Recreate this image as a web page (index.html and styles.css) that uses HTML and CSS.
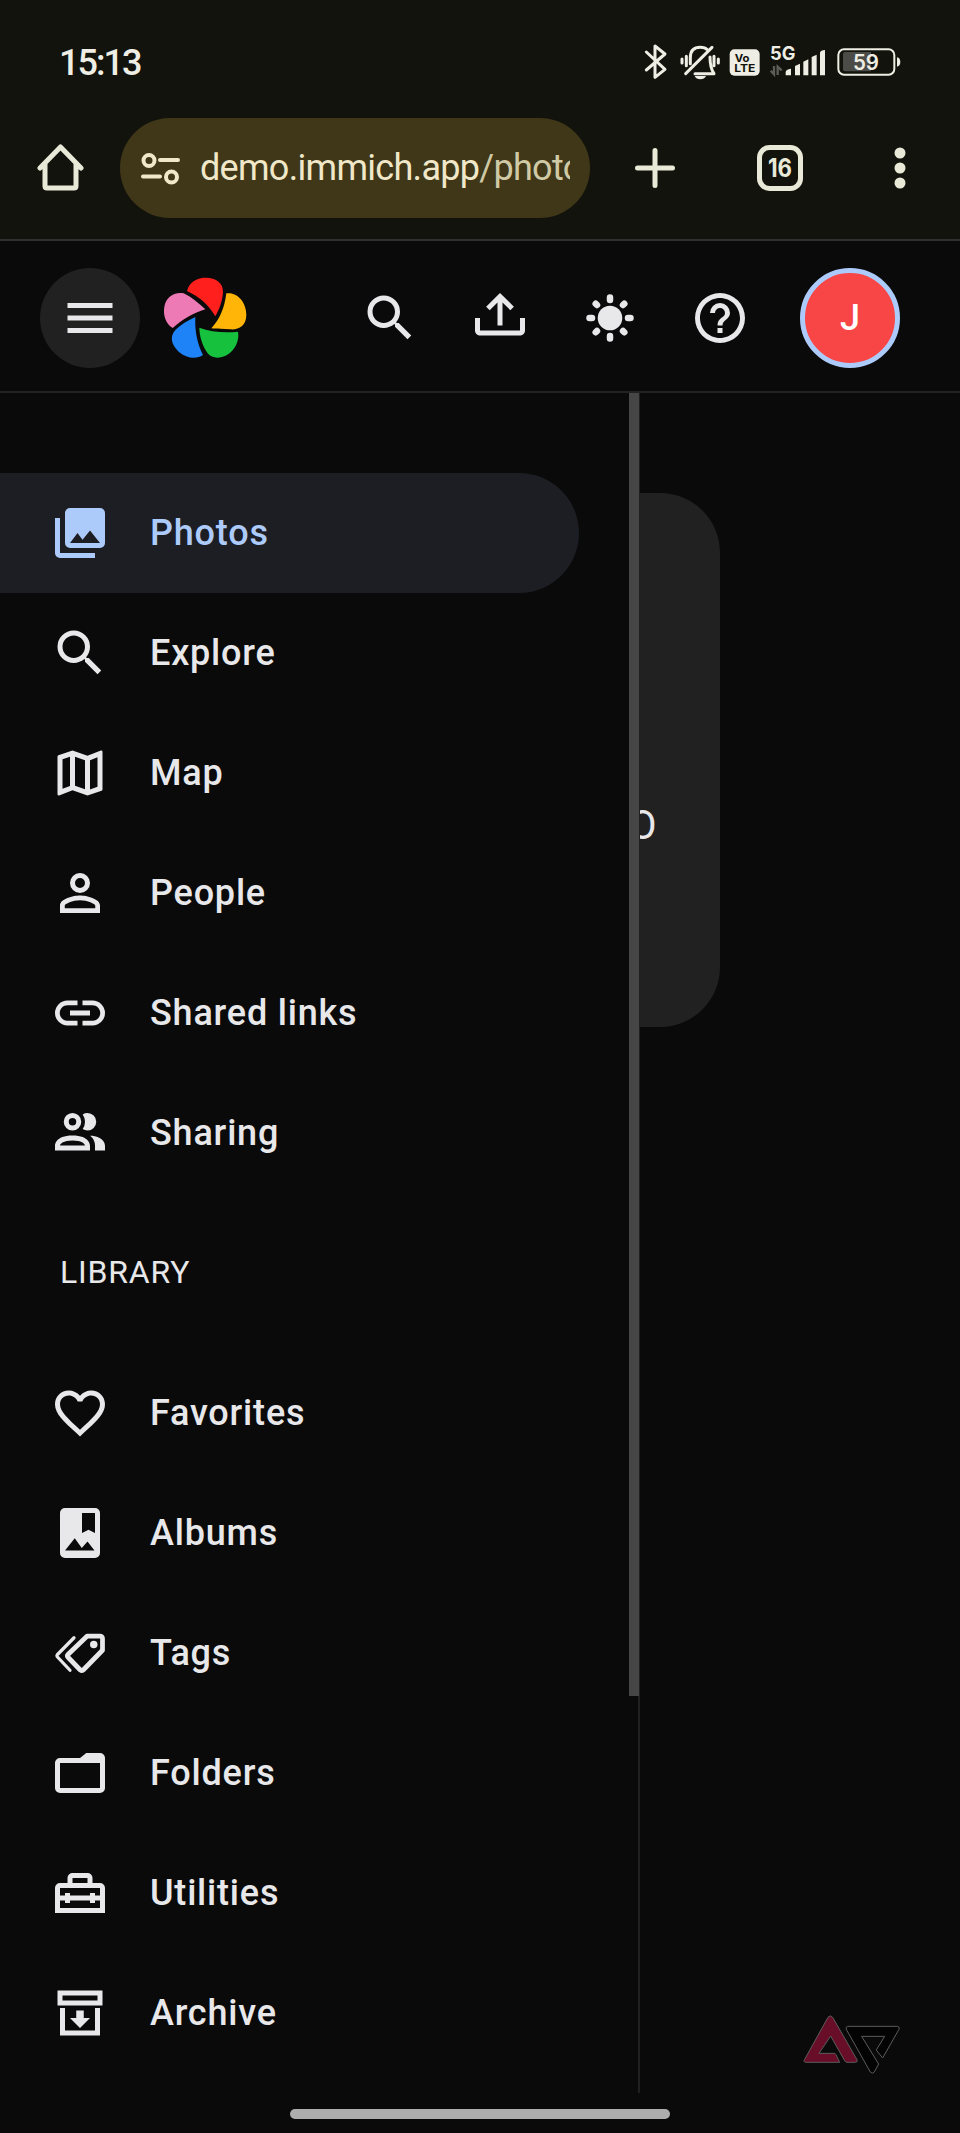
FILE: index.html
```html
<!DOCTYPE html>
<html lang="en">
<head>
  <meta charset="utf-8">
  <title>Photos - Immich</title>
  <link rel="stylesheet" href="styles.css">
</head>
<body>
  <div class="statusbar">
    <span class="time">15:13</span>
    <div class="status-icons">
      <svg width="28" height="40" viewBox="490 125 84 120"><path class="line" stroke-width="9" d="M500 155L556 207L526 231V137L556 161L500 209"/></svg>
      <svg width="42" height="40" viewBox="598 125 126 120">
        <path class="line" stroke-width="9" d="M632 190V172C632 150 645 141 662 141C672 141 679 144 684 149M691 170C691 195 694 207 703 220H646M618 220L697 141M607 176V188M620 168V196M703 168V196M716 176V188"/>
        <path class="fill" d="M645 227H679Q674 237 662 237Q650 237 645 227Z"/>
      </svg>
      <svg width="31.33" height="40" viewBox="748 125 94 120">
        <rect class="fill" x="750" y="147" width="90" height="79" rx="14"/>
        <text class="volte" x="765" y="184" textLength="44" lengthAdjust="spacingAndGlyphs">Vo</text>
        <text class="volte" x="764" y="216" textLength="63" lengthAdjust="spacingAndGlyphs">LTE</text>
      </svg>
      <svg width="60" height="40" viewBox="866 125 180 120">
        <text class="network" x="869" y="179" textLength="76" lengthAdjust="spacingAndGlyphs">5G</text>
        <path class="arrows" d="M881 197V222L871 211M892 224V199L904 210"/>
        <path class="fill" d="M916 216Q916 207 932 205V225H916ZM944 197L959 190V225H944ZM969 184L984 177V225H969ZM994 170L1009 163V225H994ZM1019 157Q1021 149 1034 149V225H1019Z"/>
      </svg>
      <svg width="64.67" height="40" viewBox="1070 125 194 120">
        <path class="charge" d="M1094 155H1172V213H1094Q1088 213 1088 207V161Q1088 155 1094 155Z"/>
        <rect class="line" x="1074" y="147" width="168" height="76" rx="17" stroke-width="6"/>
        <path class="fill" d="M1250 171Q1260 173 1260 185Q1260 197 1250 199Z"/>
        <text class="battery" x="1118" y="209" textLength="78" lengthAdjust="spacingAndGlyphs">59</text>
      </svg>
    </div>
  </div>

  <div class="toolbar">
    <svg class="home" width="48" height="48" viewBox="0 0 48 48"><path class="line" stroke-width="5" d="M3 24L23.5 3L44 24M8 20V42Q8 44 10 44H37Q39 44 39 42V20"/></svg>
    <div class="url">
      <svg width="40" height="34" viewBox="0 0 40 34"><path class="line" stroke-width="4" stroke-linecap="butt" d="M20 9H38M3 25.5H20"/><circle class="line" stroke-width="4" cx="9" cy="9.500" r="5.500"/><circle class="line" stroke-width="4" cx="31.500" cy="26" r="5.500"/></svg>
      <span class="address">demo.immich.app<span class="path">/photos</span></span>
    </div>
    <svg class="plus" width="42" height="42" viewBox="0 0 42 42"><path class="line" stroke-width="5" d="M3.500 21H38.500M21 3.500V38.500"/></svg>
    <svg class="tabs" width="46" height="46" viewBox="0 0 46 46">
      <rect class="line" x="2.500" y="2.500" width="41" height="41" rx="10" stroke-width="5"/>
      <text class="tabcount" x="11" y="32" textLength="24" lengthAdjust="spacingAndGlyphs">16</text>
    </svg>
    <svg class="more" width="12" height="42" viewBox="0 0 12 42"><g class="fill"><circle cx="6" cy="6" r="5.500"/><circle cx="6" cy="21" r="5.500"/><circle cx="6" cy="36" r="5.500"/></g></svg>
  </div>

  <header class="header">
    <button class="menu"><svg class="icon" viewBox="0 0 24 24"><path d="M3,6H21V8H3V6M3,11H21V13H3V11M3,16H21V18H3V16Z"/></svg></button>
    <svg class="logo" viewBox="485 105 260 255">
      <path fill="#ff201d" d="M560 153C568 120 600 113 615 113C650 113 668 130 668 155C667 185 655 210 645 229C625 195 600 172 560 153Z"/>
      <path fill="#ffb508" d="M678 160C710 155 738 185 738 225C738 258 715 270 690 268C670 267 650 267 633 265C660 235 672 205 678 160Z"/>
      <path fill="#16c13e" d="M597 263C630 275 670 280 713 275C718 300 705 330 680 345C655 358 635 355 622 340C605 315 598 290 597 263Z"/>
      <path fill="#1e83f7" d="M585 231C583 270 590 310 608 345C590 357 560 357 535 335C512 312 508 290 525 270C540 255 560 243 585 231Z"/>
      <path fill="#ed79b5" d="M615 208C580 218 545 240 517 264C495 250 488 225 492 200C497 172 520 155 550 160C575 172 595 190 615 208Z"/>
    </svg>
    <div class="actions">
      <svg class="icon" viewBox="0 0 24 24"><path id="magnify" d="M9.5,3A6.5,6.5 0 0,1 16,9.500C16,11.110 15.410,12.590 14.440,13.730L14.710,14H15.500L20.500,19L19,20.500L14,15.500V14.710L13.730,14.440C12.590,15.410 11.110,16 9.500,16A6.500,6.500 0 0,1 3,9.500A6.500,6.500 0 0,1 9.500,3M9.500,5C7,5 5,7 5,9.500C5,12 7,14 9.500,14C12,14 14,12 14,9.500C14,7 12,5 9.500,5Z"/></svg>
      <svg class="icon" viewBox="0 0 24 24"><path d="M2 12H4V17H20V12H22V17C22 18.110 21.110 19 20 19H4C2.900 19 2 18.110 2 17V12M12 2L6.460 7.460L7.880 8.880L11 5.750V15H13V5.750L16.130 8.880L17.550 7.450L12 2Z"/></svg>
      <svg class="icon" viewBox="0 0 60 60"><circle cx="30" cy="30" r="12.300"/><path class="line" stroke-width="6.500" d="M30 9.500V12M30 48V50.500M9.500 30H12M48 30H50.500M15.700 15.700L17 17M43 43L44.300 44.300M15.700 44.300L17 43M43 17L44.300 15.700"/></svg>
      <svg class="icon" viewBox="0 0 24 24"><path d="M11,18H13V16H11V18M12,2A10,10 0 0,0 2,12A10,10 0 0,0 12,22A10,10 0 0,0 22,12A10,10 0 0,0 12,2M12,20C7.590,20 4,16.410 4,12C4,7.590 7.590,4 12,4C16.410,4 20,7.590 20,12C20,16.410 16.410,20 12,20M12,6A4,4 0 0,0 8,10H10A2,2 0 0,1 12,8A2,2 0 0,1 14,10C14,12 11,11.750 11,15H13C13,12.750 16,12.500 16,10A4,4 0 0,0 12,6Z"/></svg>
      <div class="avatar">J</div>
    </div>
  </header>

  <main class="main">
    <nav class="sidebar">
      <a class="item active">
        <svg class="icon" viewBox="0 0 24 24"><path d="M22,16V4A2,2 0 0,0 20,2H8A2,2 0 0,0 6,4V16A2,2 0 0,0 8,18H20A2,2 0 0,0 22,16M11,12L13.030,14.710L16,11L20,16H8M2,6V20A2,2 0 0,0 4,22H18V20H4V6"/></svg>
        <span>Photos</span>
      </a>
      <a class="item">
        <svg class="icon" viewBox="0 0 24 24"><use href="#magnify"/></svg>
        <span>Explore</span>
      </a>
      <a class="item">
        <svg class="icon" viewBox="0 0 24 24"><path d="M20.500,3L20.340,3.030L15,5.100L9,3L3.360,4.900C3.150,4.970 3,5.150 3,5.380V20.500A0.500,0.500 0 0,0 3.500,21L3.660,20.970L9,18.900L15,21L20.640,19.100C20.850,19.030 21,18.850 21,18.620V3.500A0.500,0.500 0 0,0 20.500,3M10,5.470L14,6.870V18.530L10,17.130V5.470M5,6.460L8,5.450V17.150L5,18.310V6.460M19,17.540L16,18.550V6.860L19,5.700V17.540Z"/></svg>
        <span>Map</span>
      </a>
      <a class="item">
        <svg class="icon" viewBox="0 0 24 24"><path d="M12,4A4,4 0 0,1 16,8A4,4 0 0,1 12,12A4,4 0 0,1 8,8A4,4 0 0,1 12,4M12,6A2,2 0 0,0 10,8A2,2 0 0,0 12,10A2,2 0 0,0 14,8A2,2 0 0,0 12,6M12,13C14.670,13 20,14.330 20,17V20H4V17C4,14.330 9.330,13 12,13M12,14.900C9.030,14.900 5.900,16.360 5.900,17V18.100H18.100V17C18.100,16.360 14.970,14.900 12,14.900Z"/></svg>
        <span>People</span>
      </a>
      <a class="item">
        <svg class="icon" viewBox="0 0 24 24"><path d="M3.900,12C3.900,10.290 5.290,8.900 7,8.900H11V7H7A5,5 0 0,0 2,12A5,5 0 0,0 7,17H11V15.100H7C5.290,15.100 3.900,13.710 3.900,12M8,13H16V11H8V13M17,7H13V8.900H17C18.710,8.900 20.100,10.290 20.100,12C20.100,13.710 18.710,15.100 17,15.100H13V17H17A5,5 0 0,0 22,12A5,5 0 0,0 17,7Z"/></svg>
        <span>Shared links</span>
      </a>
      <a class="item">
        <svg class="icon" viewBox="0 0 24 24"><path d="M13.070 10.410A5 5 0 0 0 13.070 4.590A3.390 3.390 0 0 1 15 4A3.500 3.500 0 0 1 15 11A3.390 3.390 0 0 1 13.070 10.410M5.500 7.500A3.500 3.500 0 1 1 9 11A3.500 3.500 0 0 1 5.500 7.500M7.500 7.500A1.500 1.500 0 1 0 9 6A1.500 1.500 0 0 0 7.500 7.500M16 17V19H2V17S2 13 9 13 16 17 16 17M14 17C13.860 16.220 12.670 15 9 15S4.070 16.310 4 17M15.950 13A5.320 5.320 0 0 1 18 17V19H22V17S22 13.370 15.940 13Z"/></svg>
        <span>Sharing</span>
      </a>
      <p class="section">LIBRARY</p>
      <a class="item">
        <svg class="icon" viewBox="0 0 24 24"><path d="M12.100,18.550L12,18.650L11.890,18.550C7.140,14.240 4,11.390 4,8.500C4,6.500 5.500,5 7.500,5C9.040,5 10.540,6 11.070,7.360H12.930C13.460,6 14.960,5 16.500,5C18.500,5 20,6.500 20,8.500C20,11.390 16.860,14.240 12.100,18.550M16.500,3C14.760,3 13.090,3.810 12,5.080C10.910,3.810 9.240,3 7.500,3C4.420,3 2,5.410 2,8.500C2,12.270 5.400,15.360 10.550,20.030L12,21.350L13.450,20.030C18.600,15.360 22,12.270 22,8.500C22,5.410 19.580,3 16.500,3Z"/></svg>
        <span>Favorites</span>
      </a>
      <a class="item">
        <svg class="icon" viewBox="0 0 24 24"><path fill-rule="evenodd" d="M6 2H18A2 2 0 0 1 20 4V20A2 2 0 0 1 18 22H6A2 2 0 0 1 4 20V4A2 2 0 0 1 6 2ZM12.800 4V12L15.400 10.700L18 12V4ZM6 19H17.800L15 15.400L12.700 18L9.900 14.100Z"/></svg>
        <span>Albums</span>
      </a>
      <a class="item">
        <svg class="icon" viewBox="0 0 24 24"><path class="line" stroke-width="1.900" d="M14.900 5.200H20A1 1 0 0 1 21 6.200V10.900L13.300 18.800Q12.700 19.300 12.100 18.800L7.200 13.700Q6.700 13.100 7.200 12.600Z"/><path class="line" stroke-width="1.300" d="M9.600 5.900L2.900 12.700Q2.600 13.100 2.900 13.500L8 18.900"/><circle cx="17.500" cy="8.600" r="1.500"/></svg>
        <span>Tags</span>
      </a>
      <a class="item">
        <svg class="icon" viewBox="0 0 24 24"><path fill-rule="evenodd" d="M20 4H14.500L12 6H4A2 2 0 0 0 2 8V18A2 2 0 0 0 4 20H20A2 2 0 0 0 22 18V6A2 2 0 0 0 20 4ZM4 8H20V18H4Z"/></svg>
        <span>Folders</span>
      </a>
      <a class="item">
        <svg class="icon" viewBox="0 0 24 24"><path fill-rule="evenodd" d="M7 8V6A2 2 0 0 1 9 4H15A2 2 0 0 1 17 6V8H20A2 2 0 0 1 22 10V20H2V10A2 2 0 0 1 4 8ZM9 6V8H15V6ZM4 10V13H6V12H8V13H16V12H18V13H20V10ZM4 15V18H20V15H18V16H16V15H8V16H6V15Z"/></svg>
        <span>Utilities</span>
      </a>
      <a class="item">
        <svg class="icon" viewBox="0 0 24 24"><path fill-rule="evenodd" d="M3 3H21V9H3ZM5 5V7H19V5ZM4 10H6V19H18V10H20V21H4ZM10.500 11H13.500V14H16L12 18L8 14H10.500Z"/></svg>
        <span>Archive</span>
      </a>
      <div class="scrollbar"></div>
    </nav>
    <div class="card"><span>O</span></div>
  </main>

  <div class="gesture"><div class="pill"></div></div>

  <svg class="watermark" width="98.300" height="61.700" viewBox="730 1120 295 185">
    <path fill="#690e29" d="M805 1130Q812 1121 819 1130L892 1257Q895 1265 887 1265H862Q858 1265 855 1260L813 1186L778 1238H823Q827 1238 829 1242L840 1265H738Q730 1264 735 1256Z"/>
    <path fill="#030303" d="M864 1157H1014Q1021 1158 1018 1166L969 1252L950 1228L975 1187H906L957 1270L944 1294Q938 1301 932 1294L860 1166Q857 1159 864 1157Z"/>
  </svg>
</body>
</html>
```
FILE: styles.css
```css
* {
  box-sizing: border-box;
}
body {
  margin: 0;
  height: 2133px;
  display: flex;
  flex-direction: column;
  overflow: hidden;
  position: relative;
  background: #0a0a0a;
  color: #e8e8ea;
  font-family: Roboto, "Liberation Sans", sans-serif;
}
svg {
  display: block;
  flex: none;
}
.line {
  fill: none;
  stroke: currentColor;
  stroke-linecap: round;
  stroke-linejoin: round;
}
.fill {
  fill: currentColor;
}

/* phone status bar */
.statusbar {
  height: 117.5px;
  padding: 6px 58.67px 0 59px;
  display: flex;
  align-items: center;
  justify-content: space-between;
  background: #12130c;
  color: #eeeee4;
}
.time {
  font-size: 36px;
  font-weight: 500;
  letter-spacing: -2px;
  margin-top: 3px;
}
.status-icons {
  display: flex;
  gap: 8px;
}
.volte,
.network,
.battery,
.tabcount {
  font-family: Inter, Roboto, sans-serif;
}
.volte {
  font-size: 31px;
  font-weight: 700;
  fill: #12130c;
}
.network {
  font-size: 55px;
  font-weight: 700;
  fill: currentColor;
}
.arrows {
  fill: none;
  stroke: #5c5d57;
  stroke-width: 7;
}
.charge {
  fill: #4b4c47;
}
.battery {
  font-size: 63px;
  font-weight: 600;
  fill: currentColor;
}

/* browser toolbar */
.toolbar {
  height: 123.5px;
  padding: 0 54.5px 21.5px 37px;
  display: flex;
  align-items: center;
  background: #12130c;
  border-bottom: 2px solid #303030;
  color: #e9e9d8;
}
.url {
  width: 470px;
  height: 100px;
  margin-left: 35px;
  padding: 0 20px;
  display: flex;
  align-items: center;
  gap: 20px;
  border-radius: 50px;
  background: #3f3718;
  color: #f0e8c8;
}
.address {
  flex: 1;
  overflow: hidden;
  white-space: nowrap;
  font-size: 36px;
  line-height: 48px;
  letter-spacing: -0.7px;
}
.path {
  color: #d0c9a5;
}
.plus {
  margin-left: 44px;
}
.tabs {
  margin-left: 81px;
}
.tabcount {
  font-size: 25px;
  font-weight: 700;
  fill: currentColor;
}
.more {
  margin-left: auto;
}

/* app header */
.header {
  height: 152px;
  padding: 26.5px 60px 0 40px;
  display: flex;
  border-bottom: 2px solid #222;
}
.menu {
  width: 100px;
  height: 100px;
  padding: 20px;
  border: none;
  border-radius: 50%;
  background: #212121;
  color: inherit;
}
.icon {
  width: 60px;
  height: 60px;
  fill: currentColor;
}
.logo {
  width: 86.67px;
  height: 85px;
  margin: 7.5px 0 0 21.67px;
}
.actions {
  margin-left: auto;
  height: 100px;
  display: flex;
  align-items: center;
  gap: 50px;
}
.avatar {
  width: 100px;
  height: 100px;
  display: flex;
  align-items: center;
  justify-content: center;
  border: 5px solid #adcbfa;
  border-radius: 50%;
  background: #f84545;
  color: #fff;
  font-size: 36px;
  font-weight: 500;
}

/* navigation drawer */
.main {
  height: 1700px;
  display: flex;
  align-items: flex-start;
}
.sidebar {
  position: relative;
  z-index: 1;
  width: 640px;
  height: 1700px;
  padding-top: 79.5px;
  background: #0a0a0a;
  border-right: 2px solid #202020;
}
.item {
  width: 578.5px;
  height: 120px;
  padding-left: 50px;
  display: flex;
  align-items: center;
  gap: 40px;
  border-radius: 0 60px 60px 0;
  font-size: 36px;
  font-weight: 500;
  letter-spacing: 0.8px;
}
.active {
  background: #1d1e24;
  color: #adcbfa;
}
.section {
  height: 160px;
  margin: 0;
  padding-left: 60px;
  font-size: 32px;
  line-height: 159px;
  letter-spacing: 0.8px;
}
.scrollbar {
  position: absolute;
  top: 0;
  right: -1px;
  width: 10.5px;
  height: 1302.5px;
  background: #464646;
}
.card {
  width: 80px;
  height: 534px;
  margin-top: 100px;
  padding-top: 308.5px;
  overflow: hidden;
  border-radius: 0 60px 60px 0;
  background: #212121;
}
.card span {
  display: block;
  margin-left: -11px;
  font-size: 40px;
  line-height: 48px;
}

/* gesture bar */
.gesture {
  flex: 1;
  padding-top: 1px;
  display: flex;
  justify-content: center;
  align-items: center;
}
.pill {
  width: 380px;
  height: 10px;
  border-radius: 5px;
  background: #adadad;
}
.watermark {
  position: absolute;
  left: 803.3px;
  top: 2013.8px;
  stroke: #5c5c5c;
  stroke-width: 3;
}
```
